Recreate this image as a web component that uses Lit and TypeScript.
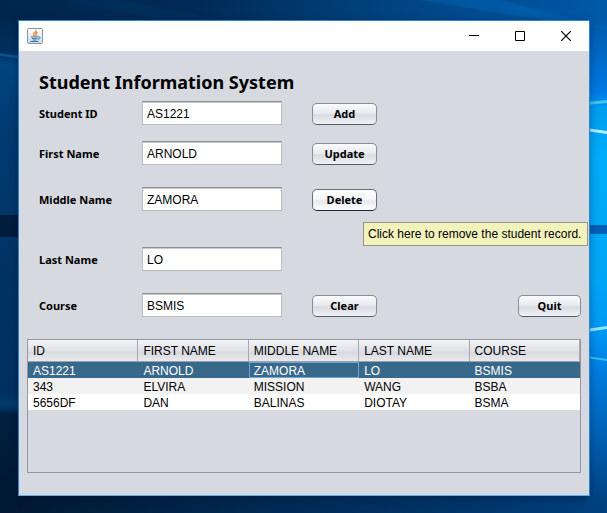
import { LitElement, html, css, svg } from "lit";
import { customElement, state } from "lit/decorators.js";
import { classMap } from "lit/directives/class-map.js";

interface Field {
  id: string;
  label: string;
  value: string;
  action?: string;
  tip?: string;
}

const FIELDS: Field[] = [
  { id: "student-id", label: "Student ID", value: "AS1221", action: "Add" },
  { id: "first-name", label: "First Name", value: "ARNOLD", action: "Update" },
  {
    id: "middle-name",
    label: "Middle Name",
    value: "ZAMORA",
    action: "Delete",
    tip: "Click here to remove the student record.",
  },
  { id: "last-name", label: "Last Name", value: "LO" },
  { id: "course", label: "Course", value: "BSMIS", action: "Clear" },
];

const COLUMNS = ["ID", "FIRST NAME", "MIDDLE NAME", "LAST NAME", "COURSE"];

const RECORDS = [
  ["AS1221", "ARNOLD", "ZAMORA", "LO", "BSMIS"],
  ["343", "ELVIRA", "MISSION", "WANG", "BSBA"],
  ["5656DF", "DAN", "BALINAS", "DIOTAY", "BSMA"],
];

@customElement("desktop-wallpaper")
export class DesktopWallpaper extends LitElement {
  static styles = css`
    :host {
      display: block;
    }
    .art {
      display: block;
      width: 100%;
      height: 100%;
    }
  `;

  render() {
    return html`<svg class="art" viewBox="0 0 607 513" preserveAspectRatio="none" aria-hidden="true">
      ${svg`
      <defs>
        <linearGradient id="top"><stop offset="0" stop-color="#00264c"/><stop offset=".33" stop-color="#002b56"/><stop offset=".62" stop-color="#00427e"/><stop offset="1" stop-color="#0059a8"/></linearGradient>
        <linearGradient id="bottom"><stop offset="0" stop-color="#001831"/><stop offset=".45" stop-color="#002a54"/><stop offset=".75" stop-color="#003468"/><stop offset="1" stop-color="#00407e"/></linearGradient>
        <linearGradient id="left" x2="0" y2="1"><stop offset="0" stop-color="#00284f"/><stop offset=".07" stop-color="#003060"/><stop offset=".09" stop-color="#004682"/><stop offset=".2" stop-color="#003c72"/><stop offset=".5" stop-color="#003364"/><stop offset=".76" stop-color="#003060"/><stop offset=".78" stop-color="#003c70"/><stop offset=".8" stop-color="#001f40"/><stop offset="1" stop-color="#001831"/></linearGradient>
        <linearGradient id="right" x2="0" y2="1"><stop offset="0" stop-color="#0059a8"/><stop offset=".06" stop-color="#0066c0"/><stop offset=".15" stop-color="#007ae4"/><stop offset=".18" stop-color="#009cf0"/><stop offset=".28" stop-color="#00acfa"/><stop offset=".54" stop-color="#00a6f6"/><stop offset=".65" stop-color="#0096f4"/><stop offset=".72" stop-color="#007ee0"/><stop offset=".86" stop-color="#0060b4"/><stop offset="1" stop-color="#00407e"/></linearGradient>
      </defs>
      <rect width="607" height="24" fill="url(#top)"/>
      <rect y="490" width="607" height="23" fill="url(#bottom)"/>
      <rect y="20" width="22" height="493" fill="url(#left)"/>
      <rect x="586" y="20" width="21" height="484" fill="url(#right)"/>
      <path d="M420 0H500L607 27V30L570 24Z" fill="#0068bc" opacity=".4"/>
      <path d="M60 0H120L240 24H180Z" fill="#003565" opacity=".4"/>
      <path d="M0 53L20 56V59L0 56Z" fill="#0868a8" opacity=".6"/>
      <rect y="215" width="22" height="22" fill="#001c3c"/>
      <path d="M586 102L607 100V103L586 105Z" fill="#40c4f4"/>
      <path d="M586 128L607 131V134L586 131Z" fill="#b4ecfa"/>
      <rect x="586" y="225" width="21" height="9" fill="#0060b4"/>
      <path d="M586 329L607 326V329L586 332Z" fill="#90e8fc"/>
      <path d="M586 356L607 359V361L586 358Z" fill="#38bcf4"/>
      `}
    </svg>`;
  }
}

@customElement("app-root")
export class AppRoot extends LitElement {
  @state() private selectedRow = 0;
  @state() private focusedColumn = 2;

  static styles = css`
    :host {
      display: grid;
      min-height: 100vh;
      font: 12px/16px "Liberation Sans", Arial, sans-serif;
      color: #000;
    }
    * {
      box-sizing: border-box;
    }
    .wallpaper,
    .window {
      grid-area: 1 / 1;
      min-width: 0;
    }
    .window {
      display: flex;
      flex-direction: column;
      margin: 20px 17px 17px 18px;
      border: 1px solid #2b86cf;
      border-bottom-color: #5fb0ea;
      background: #d6d9df;
      box-shadow: 0 2px 8px rgba(0, 10, 40, 0.35);
    }
    .titlebar {
      display: flex;
      align-items: center;
      justify-content: space-between;
      height: 30px;
      padding-left: 8px;
      background: #fff;
    }
    .java {
      width: 16px;
      height: 16px;
    }
    .controls {
      display: flex;
    }
    .control {
      display: grid;
      place-items: center;
      width: 46px;
      height: 30px;
      padding: 0;
      border: 0;
      background: none;
    }
    .content {
      flex: 1;
      display: flex;
      flex-direction: column;
      padding: 20px 8px 22px;
    }
    h1 {
      margin: 0;
      padding-left: 12px;
      font: bold 18px/22px "Noto Sans", sans-serif;
    }
    .form {
      display: grid;
      grid-template-columns: 103px 140px 65px 1fr;
      grid-template-rows: 40px 46px 60px 46px 24px;
      align-items: start;
      margin-top: 8px;
      padding-left: 12px;
    }
    .form label {
      grid-column: 1;
      font: bold 11px/26px "Noto Sans", sans-serif;
    }
    .form input {
      grid-column: 2;
      width: 100%;
      height: 24px;
      padding: 1px 4px 0;
      border: 1px solid #b9bcc4;
      border-top-color: #8d8f94;
      border-radius: 0;
      background: #fff;
      box-shadow: inset 0 1px #c8cacd;
      font: inherit;
      color: inherit;
      outline: none;
    }
    .action {
      grid-column: 3;
      position: relative;
      margin: 2px 0 0 30px;
      width: 65px;
    }
    .quit {
      grid-column: 4;
      grid-row: 5;
      justify-self: end;
      width: 63px;
      margin-top: 2px;
    }
    .button {
      display: block;
      width: 100%;
      height: 22px;
      padding: 0;
      border: 1px solid #888d98;
      border-bottom-color: #555963;
      border-radius: 5px;
      background: linear-gradient(#fbfbfc, #e9ebef 45%, #d8dbe1 55%, #f0f2f6);
      font: bold 11px/16px "Noto Sans", sans-serif;
      color: #000;
    }
    .button.hover {
      border-color: #6a6f7a;
      border-bottom-color: #20242e;
      background: linear-gradient(#fff, #f6f7f9 45%, #e6e9ee 55%, #fdfeff);
    }
    .tooltip {
      position: absolute;
      top: 33px;
      left: 51px;
      z-index: 1;
      padding: 3px 6px 3px 4px;
      border: 1px solid #93958b;
      background: #f2f2bd;
      white-space: nowrap;
    }
    .scroller {
      flex: 1;
      margin-top: 22px;
      border: 1px solid #9297a1;
    }
    table {
      width: 100%;
      table-layout: fixed;
      border-collapse: separate;
      border-spacing: 0;
    }
    th {
      height: 22px;
      padding: 0 5px;
      border-right: 1px solid #a4a8b1;
      border-bottom: 1px solid #9ba0aa;
      background: linear-gradient(#f3f4f6, #dfe1e6 50%, #d8dae0 60%, #e8eaee);
      font-weight: normal;
      text-align: left;
      white-space: nowrap;
    }
    td {
      height: 16px;
      padding: 2px 5px 0;
      line-height: 14px;
      white-space: nowrap;
    }
    tbody tr {
      background: #fff;
    }
    tbody tr:nth-child(even) {
      background: #f2f2f2;
    }
    tbody tr.selected {
      background: #39698a;
      color: #fff;
    }
    td.focused {
      box-shadow: inset 0 0 0 1px #73a4d1;
    }
  `;

  private select(row: number, column: number) {
    this.selectedRow = row;
    this.focusedColumn = column;
  }

  private renderField(field: Field, index: number) {
    const row = `grid-row:${index + 1}`;
    return html`
      <label for=${field.id} style=${row}>${field.label}</label>
      <input id=${field.id} type="text" .value=${field.value} style=${row} />
    `;
  }

  private renderAction(field: Field, index: number) {
    if (!field.action) return null;
    return html`<div class="action" style=${`grid-row:${index + 1}`}>
      <button
        type="button"
        class=${classMap({ button: true, hover: !!field.tip })}
        aria-describedby=${field.tip ? "tip" : ""}
      >${field.action}</button>
      ${field.tip ? html`<div class="tooltip" id="tip" role="tooltip">${field.tip}</div>` : null}
    </div>`;
  }

  render() {
    return html`
      <desktop-wallpaper class="wallpaper"></desktop-wallpaper>
      <main class="window">
        <header class="titlebar">
          <svg class="java" viewBox="0 0 16 16" aria-hidden="true">
            <defs>
              <linearGradient id="tile" x2="0" y2="1">
                <stop offset="0" stop-color="#fff" />
                <stop offset="1" stop-color="#cbd9e6" />
              </linearGradient>
            </defs>
            <rect x=".5" y=".5" width="15" height="15" rx="1" fill="url(#tile)" stroke="#8195a8" />
            <path d="M9.200 2c.7 2-3.400 2.800-2.600 4.600.2.600.9 1 1.100 1.500M10.600 4.300c-1.500.6-2.100 1.200-1.500 2.200.4.600.2 1.100-.4 1.600" fill="none" stroke="#e8862e" stroke-width="1.300" />
            <path d="M4 8.900h7M4.800 10.600h5.700M5.500 12h4.200M11 8.900c3-.6 2.800 2-.3 2.400M3.300 13.500h8.200" fill="none" stroke="#4779a0" />
          </svg>
          <div class="controls">
            <button type="button" class="control" aria-label="Minimize">
              <svg width="10" height="10" viewBox="0 0 10 10"><path d="M0 4.500H10" stroke="#000" /></svg>
            </button>
            <button type="button" class="control" aria-label="Maximize">
              <svg width="10" height="10" viewBox="0 0 10 10"><path d="M.5.5h9v9h-9z" fill="none" stroke="#000" /></svg>
            </button>
            <button type="button" class="control" aria-label="Close">
              <svg width="10" height="10" viewBox="0 0 10 10"><path d="M0 0L10 10M10 0L0 10" stroke="#000" stroke-width="1.200" /></svg>
            </button>
          </div>
        </header>
        <div class="content">
          <h1>Student Information System</h1>
          <form class="form" @submit=${(e: Event) => e.preventDefault()}>
            ${FIELDS.map((f, i) => this.renderField(f, i))}
            ${FIELDS.map((f, i) => this.renderAction(f, i))}
            <div class="quit"><button type="button" class="button">Quit</button></div>
          </form>
          <div class="scroller">
            <table>
              <thead>
                <tr>${COLUMNS.map((c) => html`<th scope="col">${c}</th>`)}</tr>
              </thead>
              <tbody>
                ${RECORDS.map(
                  (record, r) => html`<tr class=${classMap({ selected: r === this.selectedRow })}>
                    ${record.map(
                      (cell, c) => html`<td
                        class=${classMap({ focused: r === this.selectedRow && c === this.focusedColumn })}
                        @click=${() => this.select(r, c)}
                      >${cell}</td>`
                    )}
                  </tr>`
                )}
              </tbody>
            </table>
          </div>
        </div>
      </main>
    `;
  }
}
